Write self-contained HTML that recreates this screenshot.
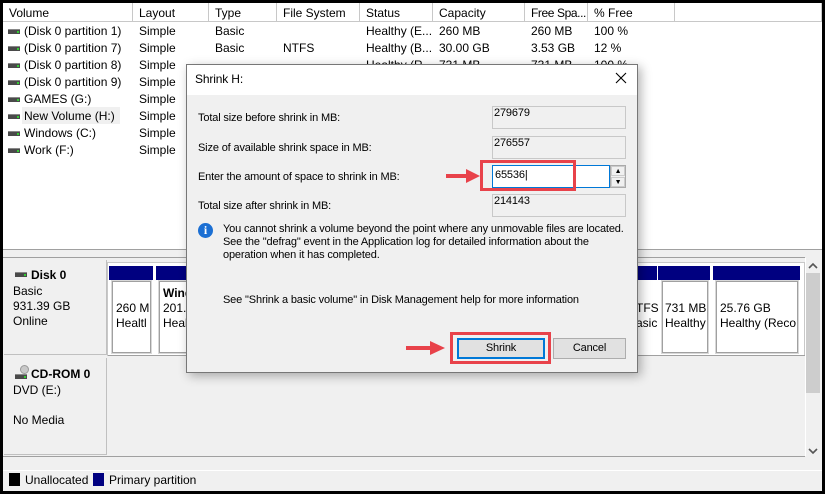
<!DOCTYPE html>
<html><head><meta charset="utf-8"><style>
*{margin:0;padding:0;box-sizing:border-box}
body{width:825px;height:494px;background:#000;font-family:"Liberation Sans",sans-serif;font-size:12px;color:#000;position:relative;overflow:hidden}
.a{position:absolute}
.t{position:absolute;white-space:nowrap;line-height:14px}
.hd{position:absolute;top:3px;height:19px;background:#fff;border-right:1px solid #c8c8c8;border-bottom:1px solid #c8c8c8;padding:3px 0 0 6px;white-space:nowrap;overflow:hidden}
.ico{position:absolute;width:12px;height:5px;background:#4a4a4a;border-top:1px solid #888}
.ico:after{content:"";position:absolute;right:1px;top:1px;width:2px;height:2px;background:#3c3}
.bar{position:absolute;top:266px;height:14px;background:#000080}
.pb{position:absolute;top:281px;height:72px;border:1px solid #a0a0a0;background:#fff;outline:1px solid #d8d8d8}
.dlg{font-size:11px;letter-spacing:-0.15px}
.lbl{position:absolute;line-height:15px;white-space:nowrap}
.field{position:absolute;left:492px;width:134px;height:23px;border:1px solid #c8c8c8;background:#f0f0f0;padding:0 0 0 1px;line-height:12px}
</style></head><body>
<div class="a" style="left:3px;top:3px;width:819px;height:488px;background:#f0f0f0"></div>
<div class="a" style="left:3px;top:3px;width:819px;height:246px;background:#fff"></div>
<div class="hd" style="left:3px;width:130px">Volume</div>
<div class="hd" style="left:133px;width:76px">Layout</div>
<div class="hd" style="left:209px;width:68px">Type</div>
<div class="hd" style="left:277px;width:83px">File System</div>
<div class="hd" style="left:360px;width:73px">Status</div>
<div class="hd" style="left:433px;width:92px">Capacity</div>
<div class="hd" style="left:525px;width:63px;letter-spacing:-0.4px">Free Spa...</div>
<div class="hd" style="left:588px;width:87px">% Free</div>
<div class="hd" style="left:675px;width:147px"></div>
<div class="a" style="left:22px;top:107px;width:98px;height:17px;background:#f0f0f0"></div>
<div class="ico" style="left:8px;top:29px"></div><div class="t" style="left:24px;top:24px">(Disk 0 partition 1)</div>
<div class="ico" style="left:8px;top:46px"></div><div class="t" style="left:24px;top:41px">(Disk 0 partition 7)</div>
<div class="ico" style="left:8px;top:63px"></div><div class="t" style="left:24px;top:58px">(Disk 0 partition 8)</div>
<div class="ico" style="left:8px;top:80px"></div><div class="t" style="left:24px;top:75px">(Disk 0 partition 9)</div>
<div class="ico" style="left:8px;top:97px"></div><div class="t" style="left:24px;top:92px">GAMES (G:)</div>
<div class="ico" style="left:8px;top:114px"></div><div class="t" style="left:24px;top:109px">New Volume (H:)</div>
<div class="ico" style="left:8px;top:131px"></div><div class="t" style="left:24px;top:126px">Windows (C:)</div>
<div class="ico" style="left:8px;top:148px"></div><div class="t" style="left:24px;top:143px">Work (F:)</div>
<div class="t" style="left:139px;top:24px">Simple</div><div class="t" style="left:139px;top:41px">Simple</div><div class="t" style="left:139px;top:58px">Simple</div><div class="t" style="left:139px;top:75px">Simple</div><div class="t" style="left:139px;top:92px">Simple</div><div class="t" style="left:139px;top:109px">Simple</div><div class="t" style="left:139px;top:126px">Simple</div><div class="t" style="left:139px;top:143px">Simple</div>
<div class="t" style="left:215px;top:24px">Basic</div><div class="t" style="left:215px;top:41px">Basic</div>
<div class="t" style="left:283px;top:41px">NTFS</div>
<div class="t" style="left:366px;top:24px">Healthy (E...</div><div class="t" style="left:366px;top:41px">Healthy (B...</div><div class="t" style="left:366px;top:58px">Healthy (R...</div>
<div class="t" style="left:439px;top:24px">260 MB</div><div class="t" style="left:439px;top:41px">30.00 GB</div><div class="t" style="left:439px;top:58px">731 MB</div>
<div class="t" style="left:531px;top:24px">260 MB</div><div class="t" style="left:531px;top:41px">3.53 GB</div><div class="t" style="left:531px;top:58px">731 MB</div>
<div class="t" style="left:594px;top:24px">100 %</div><div class="t" style="left:594px;top:41px">12 %</div><div class="t" style="left:594px;top:58px">100 %</div>
<div class="a" style="left:3px;top:249px;width:819px;height:1px;background:#a0a0a0"></div>
<div class="a" style="left:3px;top:257px;width:802px;height:200px;background:#f0f0f0;border-top:1px solid #a0a0a0;border-bottom:1px solid #a0a0a0"></div>
<div class="a" style="left:4px;top:260px;width:103px;height:95px;border-right:1px solid #c0c0c0;border-bottom:1px solid #c0c0c0"></div>
<div class="a" style="left:4px;top:358px;width:103px;height:97px;border-right:1px solid #c0c0c0;border-bottom:1px solid #c0c0c0"></div>
<div class="a" style="left:107px;top:262px;width:698px;height:94px;background:#fff;border:1px solid #c8c8c8"></div>
<div class="a" style="left:108px;top:355px;width:697px;height:1px;background:#a0a0a0"></div>
<div class="ico" style="left:15px;top:272px"></div>
<div class="t" style="left:31px;top:268px;font-weight:bold">Disk 0</div>
<div class="t" style="left:13px;top:284px">Basic</div>
<div class="t" style="left:13px;top:299px">931.39 GB</div>
<div class="t" style="left:13px;top:314px">Online</div>
<div class="a" style="left:20px;top:365px;width:9px;height:9px;border-radius:50%;background:#c8c8c8;border:1px solid #999"></div>
<div class="ico" style="left:15px;top:374px"></div>
<div class="t" style="left:31px;top:367px;font-weight:bold">CD-ROM 0</div>
<div class="t" style="left:13px;top:383px">DVD (E:)</div>
<div class="t" style="left:13px;top:413px">No Media</div>
<div class="bar" style="left:109px;width:44px"></div>
<div class="bar" style="left:156px;width:460px"></div>
<div class="bar" style="left:616px;width:41px"></div>
<div class="bar" style="left:658px;width:52px"></div>
<div class="bar" style="left:713px;width:87px"></div>
<div class="pb" style="left:112px;width:39px"></div>
<div class="pb" style="left:159px;width:460px"></div>
<div class="pb" style="left:662px;width:46px"></div>
<div class="pb" style="left:716px;width:82px"></div>
<div class="t" style="left:116px;top:301px">260 M</div><div class="t" style="left:116px;top:316px">Healtl</div>
<div class="t" style="left:163px;top:286px;font-weight:bold">Windows</div><div class="t" style="left:163px;top:301px">201.5</div><div class="t" style="left:163px;top:316px">Heal</div>
<div class="t" style="left:636px;top:301px">TFS</div><div class="t" style="left:636px;top:316px">asic</div>
<div class="t" style="left:665px;top:301px">731 MB</div><div class="t" style="left:665px;top:316px">Healthy</div>
<div class="t" style="left:720px;top:301px">25.76 GB</div><div class="t" style="left:720px;top:316px">Healthy (Reco</div>
<div class="a" style="left:805px;top:258px;width:17px;height:198px;background:#f0f0f0;border-left:1px solid #fff"></div>
<div class="a" style="left:806px;top:273px;width:14px;height:120px;background:#cdcdcd"></div>
<svg class="a" style="left:808px;top:262px" width="10" height="8"><path d="M1 6L5 2L9 6" stroke="#555" stroke-width="1.6" fill="none"/></svg>
<svg class="a" style="left:808px;top:447px" width="10" height="8"><path d="M1 2L5 6L9 2" stroke="#555" stroke-width="1.6" fill="none"/></svg>
<div class="a" style="left:3px;top:470px;width:819px;height:1px;background:#fff"></div>
<div class="a" style="left:9px;top:473px;width:11px;height:13px;background:#000"></div>
<div class="t" style="left:25px;top:473px">Unallocated</div>
<div class="a" style="left:93px;top:473px;width:11px;height:13px;background:#000080"></div>
<div class="t" style="left:109px;top:473px">Primary partition</div>
<!-- dialog -->
<div class="dlg">
<div class="a" style="left:186px;top:64px;width:452px;height:309px;background:#f0f0f0;border:1px solid #777;box-shadow:3px 3px 10px rgba(0,0,0,.3)"></div>
<div class="a" style="left:187px;top:65px;width:450px;height:30px;background:#fff"></div>
<div class="t" style="left:195px;top:72px;font-size:12px">Shrink H:</div>
<svg class="a" style="left:615px;top:72px" width="12" height="12"><path d="M1 1L11 11M11 1L1 11" stroke="#000" stroke-width="1.1"/></svg>
<div class="lbl" style="left:198px;top:111px">Total size before shrink in MB:</div>
<div class="lbl" style="left:198px;top:141px">Size of available shrink space in MB:</div>
<div class="lbl" style="left:198px;top:170px">Enter the amount of space to shrink in MB:</div>
<div class="lbl" style="left:198px;top:199px">Total size after shrink in MB:</div>
<div class="field" style="top:106px">279679</div>
<div class="field" style="top:136px">276557</div>
<div class="field" style="top:194px">214143</div>
<div class="a" style="left:492px;top:165px;width:118px;height:23px;background:#fff;border:1px solid #0078d7"></div>
<div class="t" style="left:495px;top:168px">65536|</div>
<div class="a" style="left:610px;top:165px;width:16px;height:23px;border:1px solid #aaa;background:#f0f0f0"></div>
<div class="a" style="left:611px;top:166px;width:14px;height:10px;border:1px solid #ccc;font-size:7px;text-align:center;line-height:9px">&#9650;</div>
<div class="a" style="left:611px;top:177px;width:14px;height:10px;border:1px solid #ccc;font-size:7px;text-align:center;line-height:9px">&#9660;</div>
<div class="a" style="left:480px;top:160px;width:96px;height:31px;border:3px solid #e8424a"></div>
<svg class="a" style="left:444px;top:168px" width="38" height="16"><path d="M2 8H24" stroke="#e8424a" stroke-width="4"/><path d="M22 1L36 8L22 15Z" fill="#e8424a"/></svg>
<div class="a" style="left:198px;top:223px;width:15px;height:15px;border-radius:50%;background:#1b6fd3;color:#fff;font-weight:bold;font-size:12px;text-align:center;line-height:15px;font-family:'Liberation Serif',serif">i</div>
<div class="lbl" style="left:223px;top:223px;line-height:13px">You cannot shrink a volume beyond the point where any unmovable files are located.<br>See the "defrag" event in the Application log for detailed information about the<br>operation when it has completed.</div>
<div class="lbl" style="left:223px;top:293px">See "Shrink a basic volume" in Disk Management help for more information</div>
<div class="a" style="left:450px;top:332px;width:101px;height:32px;border:3px solid #e8424a"></div>
<div class="a" style="left:457px;top:338px;width:88px;height:21px;background:#e1e1e1;border:2px solid #0078d7;text-align:center;line-height:17px">Shrink</div>
<div class="a" style="left:553px;top:338px;width:73px;height:21px;background:#e1e1e1;border:1px solid #adadad;text-align:center;line-height:19px">Cancel</div>
<svg class="a" style="left:404px;top:340px" width="42" height="16"><path d="M2 8H28" stroke="#e8424a" stroke-width="4"/><path d="M26 1L41 8L26 15Z" fill="#e8424a"/></svg>
</div>
</body></html>
